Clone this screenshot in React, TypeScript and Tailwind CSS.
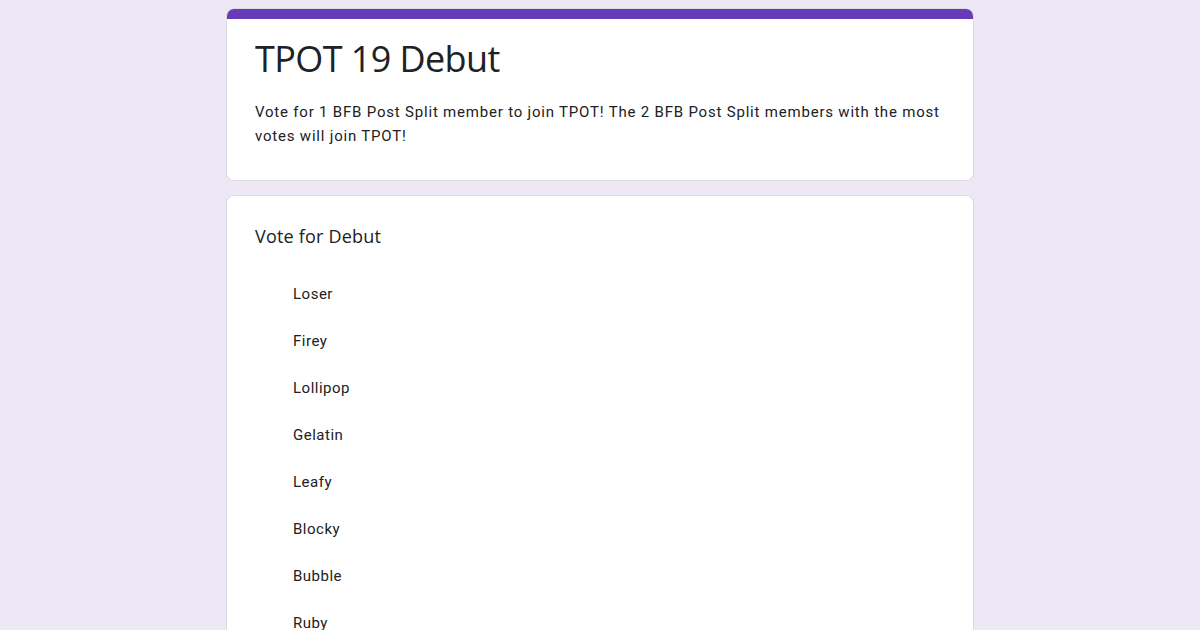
import React from 'react';

const options = ['Loser', 'Firey', 'Lollipop', 'Gelatin', 'Leafy', 'Blocky', 'Bubble', 'Ruby'];

function App() {
  return (
    <div className="min-h-screen bg-[#ede7f6] pt-[8px] overflow-hidden" style={{ height: 630 }}>
      <div className="w-[748px] mx-auto flex flex-col gap-[14px]">
        {/* Header card */}
        <div className="bg-white rounded-[8px] border border-[#dadce0] overflow-hidden">
          <div className="h-[10px] bg-[#673ab7]" />
          <div className="px-[28px] pt-[16px] pb-[32px]">
            <h1 className="text-[36px] leading-[48px] text-[#202124] font-['Open_Sans',sans-serif] tracking-[-0.6px]">
              TPOT 19 Debut
            </h1>
            <p className="mt-[17px] text-[15px] leading-[24px] text-[#202124] font-['Roboto',sans-serif] tracking-[0.8px]">
              Vote for 1 BFB Post Split member to join TPOT! The 2 BFB Post Split members with the most votes will join TPOT!
            </p>
          </div>
        </div>

        {/* Question card */}
        <div className="bg-white rounded-[8px] border border-[#dadce0] px-[28px] pt-[28px] pb-[24px]">
          <div className="text-[18px] leading-[24px] text-[#202124] font-['Open_Sans',sans-serif] tracking-[0.2px]">Vote for Debut</div>
          <div className="mt-[23px] flex flex-col">
            {options.map((o) => (
              <div key={o} className="h-[47px] flex items-center pl-[38px] text-[15px] text-[#202124] font-['Roboto',sans-serif] tracking-[0.5px]">
                {o}
              </div>
            ))}
          </div>
        </div>
      </div>
    </div>
  );
}

export default App;
